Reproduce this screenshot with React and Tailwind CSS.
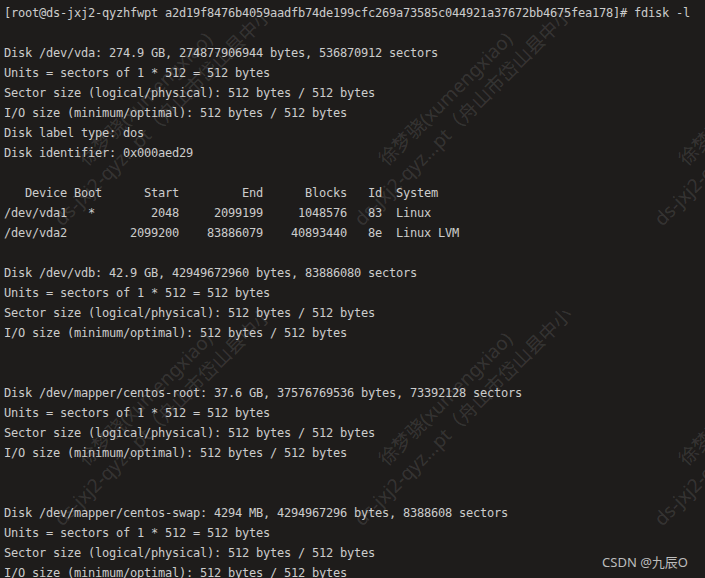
import React from 'react';

const lines = [
  '[root@ds-jxj2-qyzhfwpt a2d19f8476b4059aadfb74de199cfc269a73585c044921a37672bb4675fea178]# fdisk -l',
  '',
  'Disk /dev/vda: 274.9 GB, 274877906944 bytes, 536870912 sectors',
  'Units = sectors of 1 * 512 = 512 bytes',
  'Sector size (logical/physical): 512 bytes / 512 bytes',
  'I/O size (minimum/optimal): 512 bytes / 512 bytes',
  'Disk label type: dos',
  'Disk identifier: 0x000aed29',
  '',
  '   Device Boot      Start         End      Blocks   Id  System',
  '/dev/vda1   *        2048     2099199     1048576   83  Linux',
  '/dev/vda2         2099200    83886079    40893440   8e  Linux LVM',
  '',
  'Disk /dev/vdb: 42.9 GB, 42949672960 bytes, 83886080 sectors',
  'Units = sectors of 1 * 512 = 512 bytes',
  'Sector size (logical/physical): 512 bytes / 512 bytes',
  'I/O size (minimum/optimal): 512 bytes / 512 bytes',
  '',
  '',
  'Disk /dev/mapper/centos-root: 37.6 GB, 37576769536 bytes, 73392128 sectors',
  'Units = sectors of 1 * 512 = 512 bytes',
  'Sector size (logical/physical): 512 bytes / 512 bytes',
  'I/O size (minimum/optimal): 512 bytes / 512 bytes',
  '',
  '',
  'Disk /dev/mapper/centos-swap: 4294 MB, 4294967296 bytes, 8388608 sectors',
  'Units = sectors of 1 * 512 = 512 bytes',
  'Sector size (logical/physical): 512 bytes / 512 bytes',
  'I/O size (minimum/optimal): 512 bytes / 512 bytes',
];

function Watermark() {
  return (
    <div className="flex items-center justify-center">
      <div className="-rotate-45 whitespace-nowrap text-center text-[19px] leading-[25px] text-[rgba(210,210,210,0.15)] font-['Noto_Sans','Noto_Sans_CJK_SC',sans-serif]">
        <div>徐梦骁(xumengxiao)</div>
        <div>ds-jxj2-qyz...pt（舟山市岱山县中小</div>
      </div>
    </div>
  );
}

export default function App() {
  return (
    <div className="relative h-[578px] w-[705px] overflow-hidden bg-[#1e1c1b]">
      <div className="pl-[4px] pt-[3px] font-['DejaVu_Sans_Mono',monospace] text-[12px] leading-[20px] tracking-[-0.224px] text-[#cccccc]">
        {lines.map((line, i) => (
          <div key={i} className="h-[20px] whitespace-pre">
            {line}
          </div>
        ))}
      </div>

      {/* repeated diagonal watermark */}
      <div className="pointer-events-none absolute left-[4px] top-[-42px] grid grid-cols-[repeat(3,300px)] grid-rows-[repeat(2,300px)]">
        {[0, 1, 2, 3, 4, 5].map((i) => (
          <Watermark key={i} />
        ))}
      </div>

      <div className="absolute bottom-[7px] right-[17px] font-['Noto_Sans','Noto_Sans_CJK_SC',sans-serif] text-[13px] leading-[18px] text-[#bdbdbd]">
        CSDN @九辰O
      </div>
    </div>
  );
}
